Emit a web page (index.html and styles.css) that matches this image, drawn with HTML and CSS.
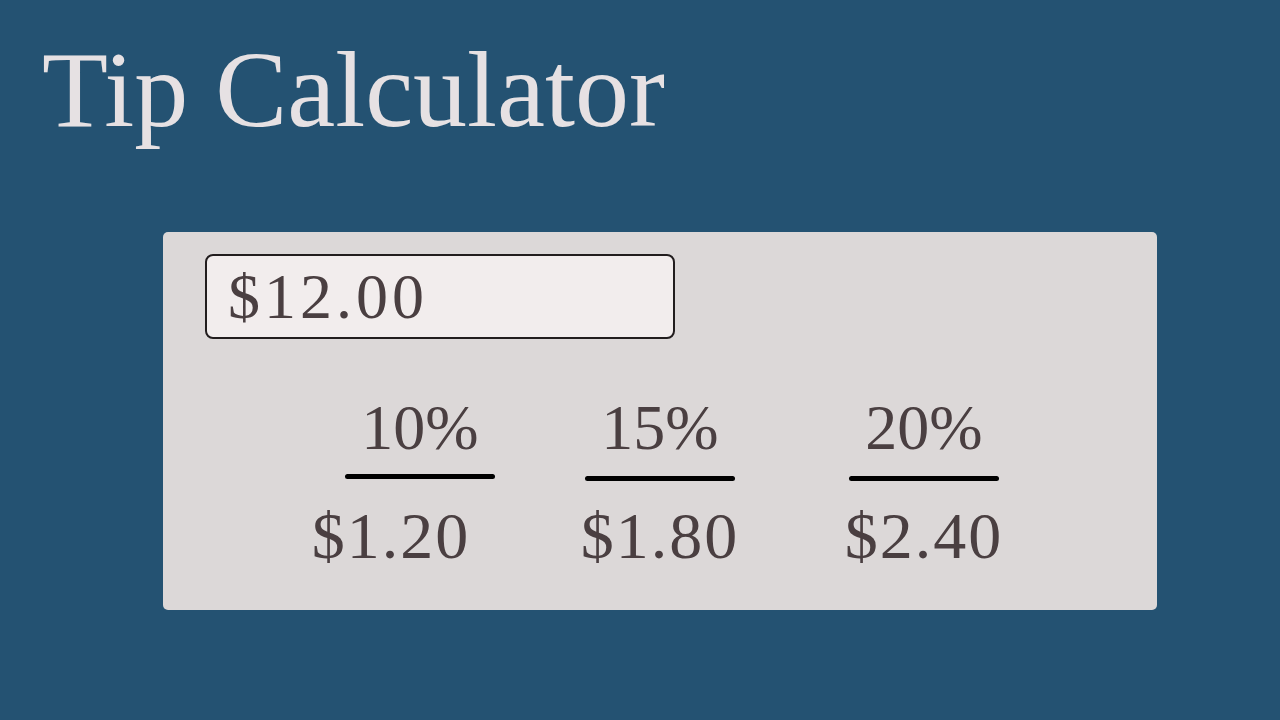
FILE: index.html
```html
<!DOCTYPE html>
<html>
<head>
<meta charset="utf-8">
<title>Tip Calculator</title>
<link rel="stylesheet" href="styles.css">
</head>
<body>
<main class="page">
  <h1 class="title">Tip Calculator</h1>
  <section class="card">
    <div class="bill-input">$12.00</div>
    <div class="tips">
      <div class="tip tip-first">
        <div class="tip-pct">10%</div>
        <div class="tip-rule"></div>
        <div class="tip-amt">$1.20</div>
      </div>
      <div class="tip">
        <div class="tip-pct">15%</div>
        <div class="tip-rule tip-rule-low"></div>
        <div class="tip-amt">$1.80</div>
      </div>
      <div class="tip tip-last">
        <div class="tip-pct">20%</div>
        <div class="tip-rule tip-rule-low"></div>
        <div class="tip-amt">$2.40</div>
      </div>
    </div>
  </section>
</main>
</body>
</html>
```
FILE: styles.css
```css
html, body {
  margin: 0;
  padding: 0;
}
body {
  background: #245272;
  width: 1280px;
  height: 720px;
  overflow: hidden;
  font-family: "Liberation Serif", "DejaVu Serif", serif;
  font-variant-numeric: oldstyle-nums;
}
.page {
  display: flex;
  flex-direction: column;
  padding: 30px 0 0 42px;
}
.title {
  margin: 0;
  font-weight: normal;
  font-size: 108px;
  line-height: 120px;
  color: #e6e1e3;
}
.card {
  margin: 82px 0 0 121px;
  width: 994px;
  height: 378px;
  box-sizing: border-box;
  background: #dcd8d8;
  border-radius: 5px;
  padding: 22px 0 0 42px;
  color: #4a3f41;
}
.bill-input {
  width: 470px;
  height: 85px;
  box-sizing: border-box;
  background: #f2eded;
  border: 2px solid #221d1e;
  border-radius: 8px;
  padding: 0 0 0 21px;
  font-size: 64px;
  line-height: 81px;
  letter-spacing: 4px;
}
.tips {
  display: flex;
  margin: 57px 0 0 140px;
  gap: 90px;
}
.tip {
  width: 150px;
  display: flex;
  flex-direction: column;
  align-items: center;
}
.tip-last {
  margin-left: 24px;
}
.tip-pct {
  font-size: 64px;
  line-height: 64px;
}
.tip-rule {
  width: 150px;
  height: 5px;
  background: #000;
  border-radius: 3px;
  margin: 14px 0 2px;
}
.tip-rule-low {
  margin: 16px 0 0;
}
.tip-amt {
  font-size: 66px;
  line-height: 80px;
  letter-spacing: 2px;
  white-space: nowrap;
  margin-top: 15px;
}
.tip-first .tip-amt {
  margin-right: 58px;
}
```
